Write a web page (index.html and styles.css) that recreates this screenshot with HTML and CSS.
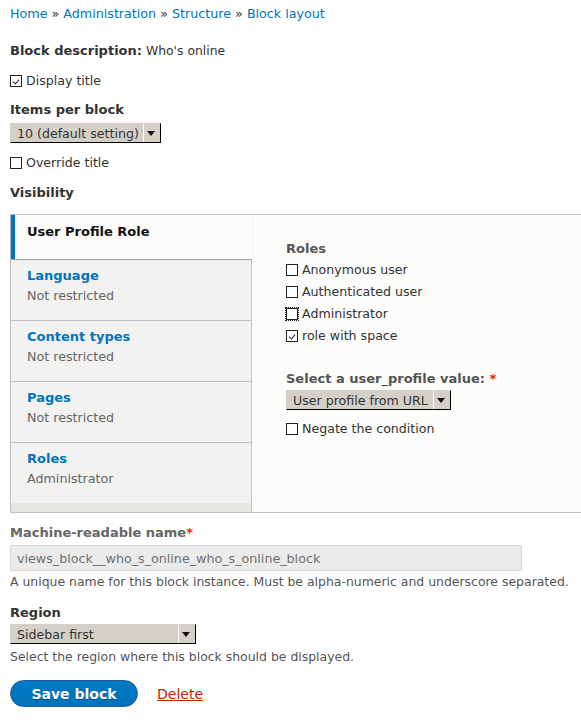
FILE: index.html
```html
<!DOCTYPE html>
<html lang="en">
<head>
    <meta charset="UTF-8">
    <title>Configure block | Who's online</title>
    <link rel="stylesheet" href="styles.css">
</head>
<body>
    <nav class="breadcrumb">
        <a href="#">Home</a> » <a href="#">Administration</a> » <a href="#">Structure</a> » <a href="#">Block layout</a>
    </nav>

    <form class="block-form">
        <div class="form-item item-desc">
            <strong class="label-inline">Block description:</strong> Who's online
        </div>

        <div class="form-item item-check">
            <label class="check"><input type="checkbox" checked> Display title</label>
        </div>

        <div class="form-item item-select">
            <label class="label">Items per block</label>
            <span class="select select-items">
                <select><option>10 (default setting)</option></select>
            </span>
        </div>

        <div class="form-item item-check">
            <label class="check"><input type="checkbox"> Override title</label>
        </div>

        <div class="form-item item-visibility">
            <span class="label">Visibility</span>
        </div>

        <!-- Onglets verticaux : menu à gauche, panneau à droite -->
        <div class="vertical-tabs">
            <ul class="tabs-menu">
                <li class="tab is-selected">
                    <a href="#"><strong>User Profile Role</strong><span class="summary"></span></a>
                </li>
                <li class="tab">
                    <a href="#"><strong>Language</strong><span class="summary">Not restricted</span></a>
                </li>
                <li class="tab">
                    <a href="#"><strong>Content types</strong><span class="summary">Not restricted</span></a>
                </li>
                <li class="tab">
                    <a href="#"><strong>Pages</strong><span class="summary">Not restricted</span></a>
                </li>
                <li class="tab">
                    <a href="#"><strong>Roles</strong><span class="summary">Administrator</span></a>
                </li>
            </ul>

            <div class="tabs-pane">
                <span class="label label-pane">Roles</span>
                <div class="checkboxes">
                    <label class="check"><input type="checkbox"> Anonymous user</label>
                    <label class="check"><input type="checkbox"> Authenticated user</label>
                    <label class="check"><input type="checkbox" class="is-focused">Administrator</label>
                    <label class="check"><input type="checkbox" checked> role with space</label>
                </div>

                <label class="label label-pane label-profile">Select a user_profile value: <span class="required">*</span></label>
                <span class="select select-profile">
                    <select><option>User profile from URL</option></select>
                </span>

                <label class="check check-negate"><input type="checkbox"> Negate the condition</label>
            </div>
        </div>

        <div class="form-item item-machine">
            <label class="label label-disabled">Machine-readable name<span class="required">*</span></label>
            <input class="text-input" type="text" value="views_block__who_s_online_who_s_online_block" disabled>
            <div class="description">A unique name for this block instance. Must be alpha-numeric and underscore separated.</div>
        </div>

        <div class="form-item item-region">
            <label class="label">Region</label>
            <span class="select select-region">
                <select><option>Sidebar first</option></select>
            </span>
            <div class="description">Select the region where this block should be displayed.</div>
        </div>

        <div class="form-actions">
            <button type="button" class="button-primary">Save block</button>
            <a href="#" class="link-delete">Delete</a>
        </div>
    </form>
</body>
</html>
```

FILE: styles.css
```css
html {
    overflow-x: hidden;
}

body {
    margin: 0;
    padding: 0 10px;
    background: #fff;
    color: #333;
    font-family: "DejaVu Sans", sans-serif;
    font-size: 13px;
}

a {
    color: #0074bd;
    text-decoration: none;
}

/* Fil d'Ariane */
.breadcrumb {
    margin-top: 4px;
    line-height: 20px;
    font-size: 12.7px;
    color: #333;
}

.form-item {
    line-height: 20px;
}

.label,
.label-inline {
    display: block;
    font-weight: bold;
}

.label-inline {
    display: inline;
}

.item-desc {
    margin-top: 17px;
    font-size: 12.4px;
}

.item-desc .label-inline {
    font-size: 13px;
}

.item-check {
    margin-top: 10px;
}

.item-select {
    margin-top: 9px;
}

.item-select .select {
    margin-top: 3px;
}

.item-visibility {
    margin-top: 10px;
}

/* Cases à cocher dessinées à la main */
.check {
    display: flex;
    align-items: center;
    gap: 4px;
    font-size: 12.6px;
    line-height: 20px;
}

.check input {
    appearance: none;
    -webkit-appearance: none;
    margin: 0;
    width: 12px;
    height: 12px;
    border: 1px solid #222;
    background: #fff;
    position: relative;
    flex: none;
}

.check input:checked::after {
    content: "";
    position: absolute;
    left: 3px;
    top: 2px;
    width: 3px;
    height: 5px;
    border-right: 1px solid #222;
    border-bottom: 1px solid #222;
    transform: rotate(40deg);
}

.check input.is-focused {
    outline: 1px dotted #222;
    outline-offset: 0;
}

/* Selects façon widget natif gris */
.select {
    position: relative;
    display: block;
    height: 20px;
    box-sizing: border-box;
    border: 1px solid;
    border-color: #d4d0c8 #000 #000 #d4d0c8;
    background: #d4d0c8;
}

.select select {
    appearance: none;
    -webkit-appearance: none;
    width: 100%;
    height: 18px;
    margin: 0;
    padding: 0 20px 0 6px;
    border: none;
    background: transparent;
    color: #333;
    font: 12.6px "DejaVu Sans", sans-serif;
    line-height: 18px;
}

.select::after {
    content: "";
    position: absolute;
    right: 0;
    top: 0;
    width: 17px;
    height: 18px;
    box-sizing: border-box;
    border-left: 1px solid #fff;
    background: #d4d0c8;
    pointer-events: none;
}

.select::before {
    content: "";
    position: absolute;
    right: 5px;
    top: 7px;
    border-left: 4px solid transparent;
    border-right: 4px solid transparent;
    border-top: 5px solid #111;
    z-index: 1;
    pointer-events: none;
}

.select-items {
    width: 151px;
}

.select-profile {
    width: 165px;
}

.select-region {
    width: 186px;
}

/* Onglets verticaux */
.vertical-tabs {
    display: flex;
    margin-top: 11px;
    margin-right: -10px;
    border: 1px solid #bfbfbf;
    border-right: none;
    border-radius: 2px 0 0 2px;
    background: #fcfcfa;
}

.tabs-menu {
    list-style: none;
    margin: 0;
    padding: 0 0 9px;
    width: 240px;
    flex: none;
    background: #e6e5e1;
    border-right: 1px solid #c0c0c0;
}

.tab {
    border-top: 1px solid #bfbfbf;
    background: #f2f2f0;
}

.tab a {
    display: block;
    padding: 6px 10px 14px 16px;
    line-height: 20px;
}

.tab strong {
    display: block;
    font-size: 13px;
}

.summary {
    display: block;
    color: #666;
    font-size: 12.7px;
}

.tab.is-selected {
    border-top: none;
    border-left: 4px solid #0074bd;
    margin-right: -1px;
    background: #fcfcfa;
    box-shadow: 0 1px 2px rgba(0, 0, 0, 0.12);
    position: relative;
}

.tab.is-selected a {
    padding: 7px 10px 13px 12px;
    color: #111;
}

.tab.is-selected .summary {
    height: 4px;
}

.tab.is-selected + .tab {
    border-top: 1px solid #b4b4b4;
}

.tabs-pane {
    flex: 1;
    padding: 24px 34px 20px;
    line-height: 20px;
}

.label-pane {
    color: #555;
}

.checkboxes .check {
    line-height: 22px;
}

.label-profile {
    margin-top: 22px;
}

.select-profile {
    margin-top: 1px;
}

.check-negate {
    margin-top: 9px;
}

.required {
    color: #e62600;
}

/* Nom machine, région, actions */
.item-machine {
    margin-top: 10px;
}

.label-disabled {
    color: #666;
}

.text-input {
    display: block;
    box-sizing: border-box;
    width: 512px;
    height: 26px;
    margin-top: 2px;
    padding: 0 6px;
    border: 1px solid #d6d6d6;
    border-radius: 2px;
    background: #ebebeb;
    color: #6f6f6f;
    font: 12.7px "DejaVu Sans", sans-serif;
}

.description {
    color: #555;
    font-size: 12.45px;
    line-height: 20px;
    margin-top: 1px;
    white-space: nowrap;
}

.item-region {
    margin-top: 11px;
}

.select-region {
    margin-top: 1px;
}

.item-region .description {
    margin-top: 3px;
}

.form-actions {
    display: flex;
    align-items: center;
    gap: 19px;
    margin-top: 13px;
}

.button-primary {
    height: 27px;
    width: 128px;
    border: 1px solid #1e5c90;
    border-radius: 20px;
    background: linear-gradient(to bottom, #007bc6, #0071b8);
    color: #fff;
    font: bold 14px "DejaVu Sans", sans-serif;
    text-shadow: 0 1px 0 rgba(0, 0, 0, 0.3);
    cursor: pointer;
}

.link-delete {
    color: #c72100;
    text-decoration: underline;
    font-size: 14px;
}
```
